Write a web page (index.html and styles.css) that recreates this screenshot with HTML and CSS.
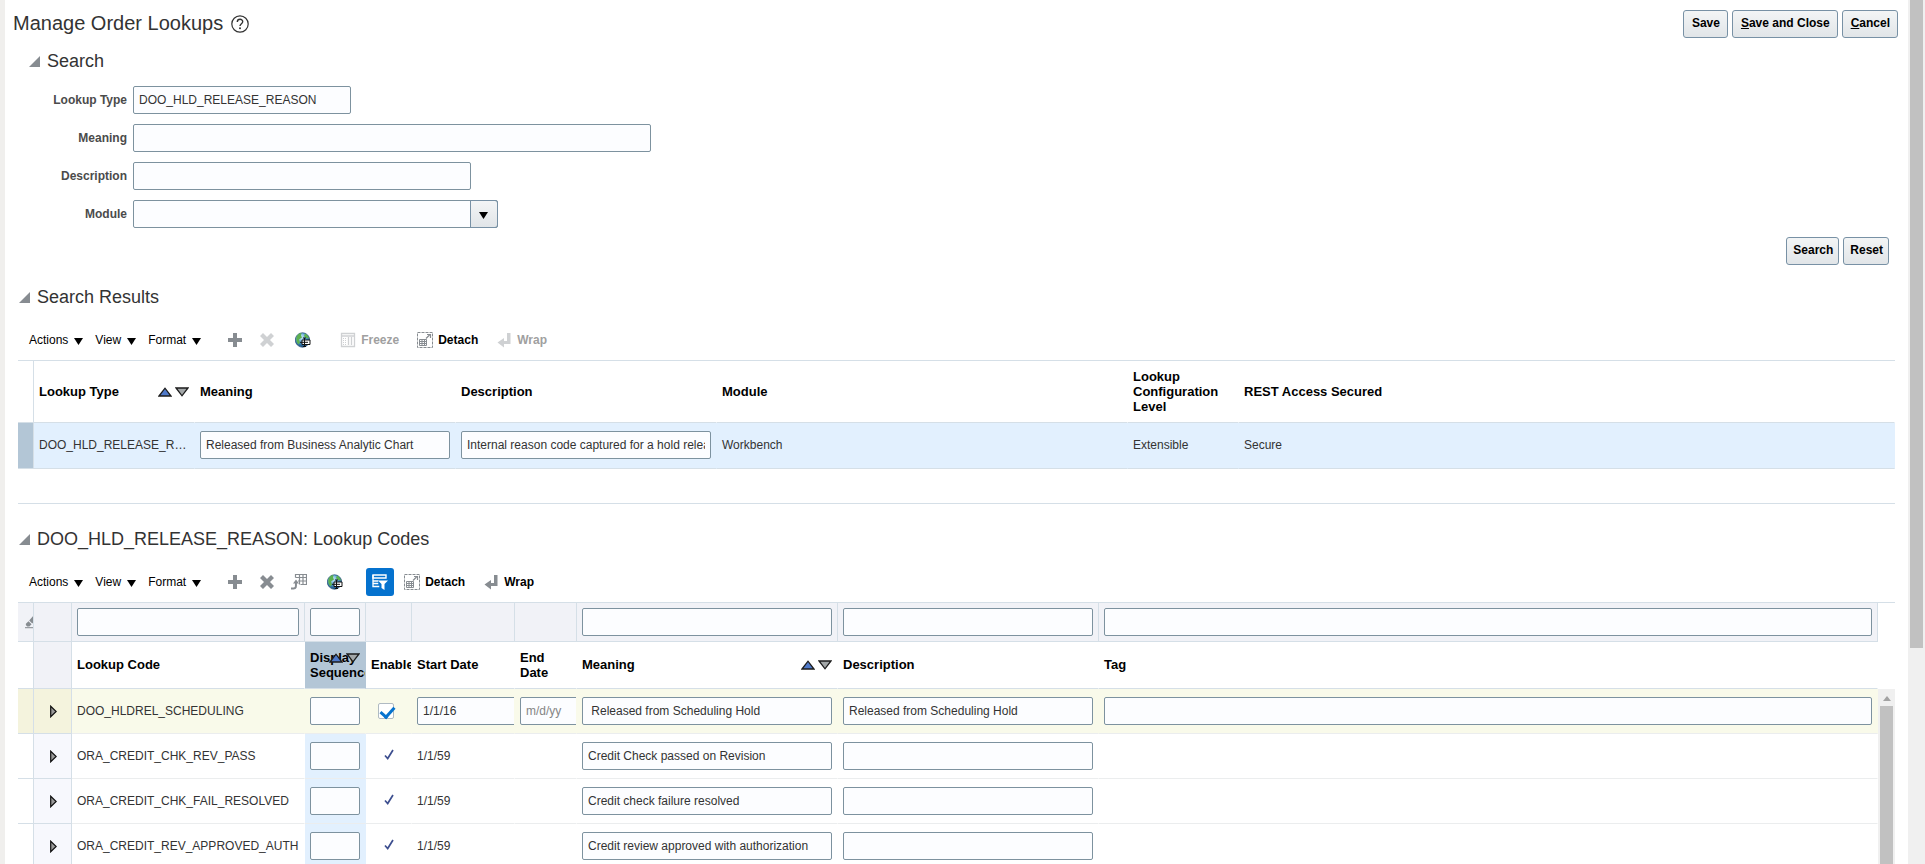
FILE: index.html
```html
<!DOCTYPE html>
<html lang="en">
<head>
<meta charset="utf-8">
<title>Manage Order Lookups</title>
<link rel="stylesheet" href="styles.css">
</head>
<body>
<svg class="defs" aria-hidden="true">
  <defs>
    <radialGradient id="ocean" cx="40%" cy="30%" r="75%"><stop offset="0" stop-color="#d4eefb"/><stop offset="0.5" stop-color="#4b9bd0"/><stop offset="1" stop-color="#123a66"/></radialGradient>
  </defs>
  <symbol id="plus" viewBox="0 0 16 16"><path d="M6 1h4v5h5v4h-5v5H6v-5H1V6h5z" fill="currentColor"/></symbol>
  <symbol id="cross" viewBox="0 0 16 16"><path d="M4 1l4 4 4-4 3 3-4 4 4 4-3 3-4-4-4 4-3-3 4-4-4-4z" fill="currentColor"/></symbol>
  <symbol id="globe" viewBox="0 0 16 16"><circle cx="7.500" cy="8" r="7.200" fill="url(#ocean)" stroke="#27527c" stroke-width=".8"/><path d="M1.500 5c1-2.500 3-4 5-4L6 3.500 7 5.500 4 7.500l1 3-1.500 2C1.500 11 .8 8 1.500 5zM10 1.500c2.500 1 3.500 3 4 5L11 6 9 4z" fill="#5db04f"/><path d="M7 8h8v4.500H7z" fill="#fff" stroke="#111"/><path d="M8 6h3M8 14.500h3M9.500 6v8.500M5 10.300h8" stroke="#111" fill="none"/></symbol>
  <symbol id="freeze" viewBox="0 0 16 16"><path d="M1.500 1.500h13v13h-13zM1 4h14M8.500 5v8M11.500 5v8" fill="none" stroke="currentColor" stroke-width="1.300"/><path d="M3 6.500h1m1 0h1M3 8.500h1m1 0h1M3 10.500h1m1 0h1M3 12.500h1m1 0h1" stroke="currentColor"/></symbol>
  <symbol id="detach" viewBox="0 0 16 16"><path d="M.5 .5h15v15H.5z" fill="none" stroke="currentColor" stroke-dasharray="3 1"/><path d="M2.500 7.500h7v6h-7zM2 9.500h8M2 11.500h8M5 8v6M7.500 8v6" fill="none" stroke="currentColor"/><path d="M9 6.500L12.500 3M10 2.500h3.500V6" fill="none" stroke="currentColor" stroke-width="1.200"/></symbol>
  <symbol id="wrap" viewBox="0 0 16 16"><path d="M11 1h3.500v11H8v3.500L1.500 10.500 8 6v3h3z" fill="currentColor"/></symbol>
  <symbol id="export" viewBox="0 0 16 16"><path d="M4.500 3.500v-3h11v10h-6M8.500 1v9.500M12 1v9.500M4.500 3.500h11M7 7h8.500" fill="none" stroke="currentColor" stroke-width="1.200"/><path d="M0 14.500h2.500c2.500 0 2.500-1 2.500-6" fill="none" stroke="currentColor" stroke-width="2"/><path d="M2 9.500L5 5.500l3 4z" fill="currentColor"/></symbol>
  <symbol id="funnel" viewBox="0 0 16 16"><path d="M1 1h13v3H1z" fill="none" stroke="#fff" stroke-width="1.400"/><path d="M.3 7h6M.3 9.500h6M.3 12.500h7M1 1v12" stroke="#fff" stroke-width="1.300"/><path d="M6 6.500h10L12.500 10v6L9.500 14v-4z" fill="#fff"/></symbol>
  <symbol id="down" viewBox="0 0 9 7"><path d="M0 0h9L4.500 7z" fill="#000"/></symbol>
  <symbol id="disclose" viewBox="0 0 11 11"><path d="M11 0v11H0z" fill="#878c91"/></symbol>
  <symbol id="expand" viewBox="0 0 7 13"><path d="M.7 1.200v10.600L6.200 6.500z" fill="#9a9a9a" stroke="#111" stroke-width="1.200"/></symbol>
  <symbol id="asc" viewBox="0 0 14 10"><path d="M1 9L7 1.200 13 9z" fill="#4f79c9" stroke="#1c1c1c" stroke-width="1.300"/></symbol>
  <symbol id="desc" viewBox="0 0 14 10"><path d="M1 1h12L7 8.800z" fill="#a3a7a8" stroke="#1c1c1c" stroke-width="1.300"/></symbol>
  <symbol id="tick" viewBox="0 0 10 11"><path d="M1 6.500L3.700 9.500 9 1" fill="none" stroke="#3d4f8f" stroke-width="1.700"/></symbol>
  <symbol id="eraser" viewBox="0 0 16 16"><path d="M0 14.500h16" stroke="#878c91" stroke-width="1.200"/><path d="M1 10l3-3 3.500 3.500-2.500 2.500H2.500L1 11.500zM4.800 6.200L9 1.500l4 4-4.700 4.200z" fill="#878c91"/></symbol>
</svg>

<main class="page">
  <header class="page-head">
    <h1>Manage Order Lookups</h1>
    <button class="icon help" aria-label="Help"><svg viewBox="0 0 18 18" width="18" height="18"><circle cx="9" cy="9" r="8.200" fill="none" stroke="#333" stroke-width="1.200"/><path d="M6.300 7c0-3.600 5.600-3.500 5.400-.2C11.600 8.700 9 8.800 9 11" fill="none" stroke="#333" stroke-width="1.400"/><circle cx="9" cy="13.200" r="1" fill="#333"/></svg></button>
    <div class="actions">
      <button class="btn">Save</button>
      <button class="btn"><u>S</u>ave and Close</button>
      <button class="btn"><u>C</u>ancel</button>
    </div>
  </header>

  <section>
    <h2 class="heading nested"><svg width="11" height="11"><use href="#disclose"/></svg>Search</h2>
    <form class="search">
      <label for="type">Lookup Type</label><input id="type" class="box w-type" value="DOO_HLD_RELEASE_REASON">
      <label for="mean">Meaning</label><input id="mean" class="box w-mean">
      <label for="desc-in">Description</label><input id="desc-in" class="box w-desc">
      <label for="module">Module</label>
      <div class="combo"><select id="module" class="box"><option></option></select><span class="combo-arrow"><svg width="9" height="7"><use href="#down"/></svg></span></div>
    </form>
    <div class="search-actions">
      <button class="btn tight">Search</button>
      <button class="btn tight">Reset</button>
    </div>
  </section>

  <section class="panel">
    <h2 class="heading"><svg width="11" height="11"><use href="#disclose"/></svg>Search Results</h2>
    <div class="toolbar">
      <div class="menus">
        <button class="tool">Actions<svg width="9" height="7"><use href="#down"/></svg></button>
        <button class="tool">View<svg width="9" height="7"><use href="#down"/></svg></button>
        <button class="tool">Format<svg width="9" height="7"><use href="#down"/></svg></button>
      </div>
      <div class="icons">
        <button class="icon" aria-label="Add"><svg width="16" height="16"><use href="#plus"/></svg></button>
        <button class="icon off" aria-label="Delete" disabled><svg width="16" height="16"><use href="#cross"/></svg></button>
        <button class="icon translate" aria-label="Translate"><svg width="16" height="16"><use href="#globe"/></svg></button>
      </div>
      <div class="labelled first">
        <button class="tool strong off" disabled><svg width="16" height="16"><use href="#freeze"/></svg>Freeze</button>
        <button class="tool strong"><svg width="16" height="16"><use href="#detach"/></svg>Detach</button>
        <button class="tool strong off" disabled><svg width="16" height="16"><use href="#wrap"/></svg>Wrap</button>
      </div>
    </div>
    <table class="grid results">
      <colgroup><col class="c-sel"><col class="c-type"><col class="c-wide"><col class="c-wide"><col class="c-module"><col class="c-level"><col></colgroup>
      <thead>
        <tr><th class="sel"></th><th><div class="sortable">Lookup Type<span class="sort"><button class="icon" aria-label="Sort ascending"><svg width="14" height="10"><use href="#asc"/></svg></button><button class="icon" aria-label="Sort descending"><svg width="14" height="10"><use href="#desc"/></svg></button></span></div></th><th>Meaning</th><th>Description</th><th>Module</th><th>Lookup Configuration Level</th><th>REST Access Secured</th></tr>
      </thead>
      <tbody>
        <tr><td class="sel"></td><td class="ellipsis">DOO_HLD_RELEASE_REASON</td><td><input class="box" aria-label="Meaning" value="Released from Business Analytic Chart"></td><td><input class="box" aria-label="Description" value="Internal reason code captured for a hold released"></td><td>Workbench</td><td>Extensible</td><td>Secure</td></tr>
      </tbody>
    </table>
  </section>

  <hr>

  <section class="panel codes-panel">
    <h2 class="heading"><svg width="11" height="11"><use href="#disclose"/></svg>DOO_HLD_RELEASE_REASON: Lookup Codes</h2>
    <div class="toolbar">
      <div class="menus">
        <button class="tool">Actions<svg width="9" height="7"><use href="#down"/></svg></button>
        <button class="tool">View<svg width="9" height="7"><use href="#down"/></svg></button>
        <button class="tool">Format<svg width="9" height="7"><use href="#down"/></svg></button>
      </div>
      <div class="icons">
        <button class="icon" aria-label="Add"><svg width="16" height="16"><use href="#plus"/></svg></button>
        <button class="icon" aria-label="Delete"><svg width="16" height="16"><use href="#cross"/></svg></button>
        <button class="icon" aria-label="Export"><svg width="16" height="16"><use href="#export"/></svg></button>
        <button class="icon translate" aria-label="Translate"><svg width="16" height="16"><use href="#globe"/></svg></button>
      </div>
      <button class="icon query" aria-label="Query by example"><svg width="16" height="16"><use href="#funnel"/></svg></button>
      <div class="labelled">
        <button class="tool strong"><svg width="16" height="16"><use href="#detach"/></svg>Detach</button>
        <button class="tool strong"><svg width="16" height="16"><use href="#wrap"/></svg>Wrap</button>
      </div>
    </div>
    <div class="scroller">
      <div class="codes-wrap">
      <table class="grid codes">
        <colgroup><col class="c-sel"><col class="c-exp"><col class="c-code"><col class="c-seq"><col class="c-on"><col class="c-start"><col class="c-end"><col class="c-wide"><col class="c-wide"><col></colgroup>
        <thead>
          <tr class="filters"><td class="eraser"><button class="icon" aria-label="Clear filters"><svg width="14" height="14"><use href="#eraser"/></svg></button></td><td></td><td><input class="box" aria-label="Filter lookup code"></td><td><input class="box" aria-label="Filter sequence"></td><td></td><td></td><td></td><td><input class="box" aria-label="Filter meaning"></td><td><input class="box" aria-label="Filter description"></td><td><input class="box" aria-label="Filter tag"></td></tr>
          <tr class="titles"><th class="sel"></th><th class="exp"></th><th>Lookup Code</th><th class="seq">Display Sequence<span class="sort over"><button class="icon" aria-label="Sort ascending"><svg width="14" height="10"><use href="#asc"/></svg></button><button class="icon" aria-label="Sort descending"><svg width="14" height="10"><use href="#desc"/></svg></button></span></th><th>Enabled</th><th>Start Date</th><th>End Date</th><th><div class="sortable">Meaning<span class="sort"><button class="icon" aria-label="Sort ascending"><svg width="14" height="10"><use href="#asc"/></svg></button><button class="icon" aria-label="Sort descending"><svg width="14" height="10"><use href="#desc"/></svg></button></span></div></th><th>Description</th><th>Tag</th></tr>
        </thead>
        <tbody>
          <tr class="current"><td class="sel"></td><td class="exp"><button class="icon" aria-label="Expand"><svg width="7" height="13"><use href="#expand"/></svg></button></td><td>DOO_HLDREL_SCHEDULING</td><td class="seq"><input class="box" aria-label="Sequence"></td><td class="on"><input type="checkbox" aria-label="Enabled" checked></td><td class="cut"><input class="box date" aria-label="Start date" value="1/1/16"></td><td class="cut"><input class="box date" aria-label="End date" placeholder="m/d/yy"></td><td><input class="box" aria-label="Meaning" value=" Released from Scheduling Hold"></td><td><input class="box" aria-label="Description" value="Released from Scheduling Hold"></td><td><input class="box" aria-label="Tag"></td></tr>
          <tr><td class="sel"></td><td class="exp"><button class="icon" aria-label="Expand"><svg width="7" height="13"><use href="#expand"/></svg></button></td><td>ORA_CREDIT_CHK_REV_PASS</td><td class="seq"><input class="box" aria-label="Sequence"></td><td class="on"><svg class="tick" width="10" height="11"><use href="#tick"/></svg></td><td>1/1/59</td><td></td><td><input class="box" aria-label="Meaning" value="Credit Check passed on Revision"></td><td><input class="box" aria-label="Description"></td><td></td></tr>
          <tr><td class="sel"></td><td class="exp"><button class="icon" aria-label="Expand"><svg width="7" height="13"><use href="#expand"/></svg></button></td><td>ORA_CREDIT_CHK_FAIL_RESOLVED</td><td class="seq"><input class="box" aria-label="Sequence"></td><td class="on"><svg class="tick" width="10" height="11"><use href="#tick"/></svg></td><td>1/1/59</td><td></td><td><input class="box" aria-label="Meaning" value="Credit check failure resolved"></td><td><input class="box" aria-label="Description"></td><td></td></tr>
          <tr><td class="sel"></td><td class="exp"><button class="icon" aria-label="Expand"><svg width="7" height="13"><use href="#expand"/></svg></button></td><td>ORA_CREDIT_REV_APPROVED_AUTH</td><td class="seq"><input class="box" aria-label="Sequence"></td><td class="on"><svg class="tick" width="10" height="11"><use href="#tick"/></svg></td><td>1/1/59</td><td></td><td><input class="box" aria-label="Meaning" value="Credit review approved with authorization"></td><td><input class="box" aria-label="Description"></td><td></td></tr>
        </tbody>
      </table>
      </div>
      <div class="grid-bar"><div class="track"><svg width="8" height="5" viewBox="0 0 8 5"><path d="M4 0l4 5H0z" fill="#a3a3a3"/></svg><div class="thumb"></div></div></div>
    </div>
  </section>
</main>
<div class="page-bar"><div class="thumb"></div></div>
</body>
</html>
```

FILE: styles.css
```css
* { box-sizing: border-box; }

body {
  margin: 0;
  height: 100vh;
  overflow: hidden;
  display: flex;
  background: #fff;
  border-left: 5px solid #f0efed;
  color: #333;
  font: 12px/15px "Liberation Sans", Arial, sans-serif;
}

button, input, select { font: inherit; color: inherit; margin: 0; }
svg { display: block; flex: none; }
.defs { position: absolute; width: 0; height: 0; }

.page { flex: 1; min-width: 0; }

.page-head { display: flex; padding: 10px 10px 0 8px; }
h1 { margin: 0; font-size: 20px; line-height: 27px; font-weight: 400; }
.help { margin: 5px 0 0 8px; height: 18px; }
.actions { display: flex; gap: 4px; margin-left: auto; }

.btn {
  height: 28px;
  padding: 0 7px 2px 8px;
  border: 1px solid #7891a5;
  border-radius: 3px;
  background: linear-gradient(#f3f5f6, #e1e5e8);
  color: #000;
  font-weight: 700;
}
.btn.tight { padding: 0 5px 2px 6px; }

.icon { display: flex; padding: 0; border: 0; background: none; color: #878c91; }

.heading {
  display: flex;
  align-items: center;
  gap: 7px;
  margin: 0;
  padding-left: 14px;
  font-size: 18px;
  line-height: 24px;
  font-weight: 400;
}
.heading.nested { padding-left: 24px; margin-top: 11px; }

.search {
  display: grid;
  grid-template-columns: 122px 1fr;
  gap: 10px 6px;
  align-items: center;
  margin-top: 13px;
}
.search label { text-align: right; font-weight: 700; color: #4b4b4b; }

.box {
  display: block;
  width: 100%;
  height: 28px;
  padding: 0 5px;
  border: 1px solid #7d929f;
  border-radius: 2px;
  background: #fcfdff;
  color: #333;
  appearance: none;
}
.w-type { width: 218px; }
.w-mean { width: 518px; }
.w-desc { width: 338px; }
.combo { position: relative; width: 365px; }
.combo-arrow {
  position: absolute;
  inset: 0 0 0 auto;
  width: 28px;
  display: flex;
  align-items: center;
  justify-content: center;
  padding: 2px 2px 0 0;
  border: 1px solid #7891a5;
  border-radius: 0 3px 3px 0;
  background: linear-gradient(#f3f5f6, #e1e5e8);
  pointer-events: none;
}

.search-actions {
  display: flex;
  justify-content: flex-end;
  gap: 4px;
  margin-top: 9px;
  padding-right: 19px;
}

.panel { padding: 20px 13px 0; }
.panel .heading { padding-left: 1px; }
.panel.codes-panel { padding-top: 23px; }

.toolbar {
  display: flex;
  align-items: center;
  height: 28px;
  margin: 17px 0 6px;
  padding-left: 11px;
}
.menus { display: flex; gap: 12px; }
.menus svg { margin-top: 2px; }
.icons { display: flex; gap: 16px; margin-left: 26px; }
.translate { margin-left: 4px; }
.labelled { display: flex; gap: 18px; margin-left: 10px; }
.labelled.first { margin-left: 29px; }
.tool {
  display: flex;
  align-items: center;
  gap: 6px;
  padding: 0;
  border: 0;
  background: none;
  color: #000;
}
.strong { gap: 5px; font-weight: 700; }
.strong svg { color: #878c91; }
.off, .off svg { color: #cfd1d3; }
.strong.off { color: #a0a0a0; }
.query {
  width: 28px;
  height: 28px;
  margin-left: 23px;
  align-items: center;
  justify-content: center;
  border-radius: 3px;
  background: #0572ce;
}

.grid {
  width: 100%;
  table-layout: fixed;
  border-collapse: separate;
  border-spacing: 0;
}
.grid th, .grid td {
  padding: 0 5px;
  border-right: 1px solid transparent;
  border-bottom: 1px solid #d5dfe7;
  overflow: hidden;
  text-align: left;
  vertical-align: middle;
}
.grid th { color: #000; font-size: 13px; font-weight: 700; }
.grid .ellipsis { text-overflow: ellipsis; white-space: nowrap; }

.c-sel { width: 16px; }
.c-exp { width: 38px; }
.c-type { width: 161px; }
.c-wide { width: 261px; }
.c-module { width: 411px; }
.c-level { width: 111px; }
.c-code { width: 233px; }
.c-seq { width: 61px; }
.c-on { width: 46px; }
.c-start { width: 103px; }
.c-end { width: 62px; }

.sortable { display: flex; align-items: center; justify-content: space-between; }
.sort { display: flex; gap: 3px; }
.sort.over { position: absolute; top: 11px; right: 5px; }

.results { border-top: 1px solid #d5dfe7; }
.results th { height: 62px; }
.results tbody td { height: 46px; padding-bottom: 1px; background: #e2f0fe; }
.grid .sel { border-right-color: #d5dfe7; padding: 0; }
.results tbody .sel { background: #b3c6d6; }

hr { height: 1px; margin: 34px 13px 0; border: 0; background: #d5dfe7; }

.scroller { display: flex; border-top: 1px solid #d5dfe7; }
.codes-wrap { flex: 1; min-width: 0; }
.codes .filters td { height: 39px; background: #f1f2f7; border-right-color: #d5dfe7; }
.codes .filters .eraser { padding: 0 0 0 7px; }
.codes .titles th { height: 47px; padding-bottom: 1px; }
.codes .exp { border-right-color: #d5dfe7; background: #f1f2f7; }
.codes .titles .seq { position: relative; background: #b3c6d6; }
.codes tbody td { height: 45px; border-bottom-color: #ebedee; white-space: nowrap; }
.codes tbody .sel, .codes tbody .exp { border-bottom-color: #d5dfe7; }
.codes tbody .exp { padding-left: 16px; background: #f7f8fd; }
.codes tbody .seq { background: #e2f0fe; }
.codes .current td, .codes .current .seq { background: #f9faea; }
.codes .current .sel, .codes .current .exp { background: #f4f3dd; }
.codes .cut { padding-right: 0; }
.codes .date { width: 120px; }
.on .tick { margin: 0 0 4px 13px; }
.box::placeholder { color: #858585; }

input[type="checkbox"] {
  display: block;
  width: 16px;
  height: 16px;
  margin-left: 7px;
  border: 1px solid #b0bac2;
  border-radius: 2px;
  appearance: none;
  background: #fff;
}
input[type="checkbox"]:checked::after {
  content: "";
  display: block;
  width: 6px;
  height: 11px;
  margin: 0 0 0 4px;
  border: solid #0572ce;
  border-width: 0 3px 3px 0;
  transform: rotate(42deg);
}

.grid-bar { display: flex; flex: none; width: 17px; padding-top: 86px; }
.track {
  flex: 1;
  display: flex;
  flex-direction: column;
  align-items: center;
  gap: 5px;
  padding-top: 7px;
  background: #f0f0f0;
}
.thumb { width: 13px; flex: 1; background: #c1c1c1; }
.page-bar { display: flex; flex-direction: column; align-items: center; width: 17px; background: #f0f0f0; }
.page-bar .thumb { flex: 0 0 75%; }
```
